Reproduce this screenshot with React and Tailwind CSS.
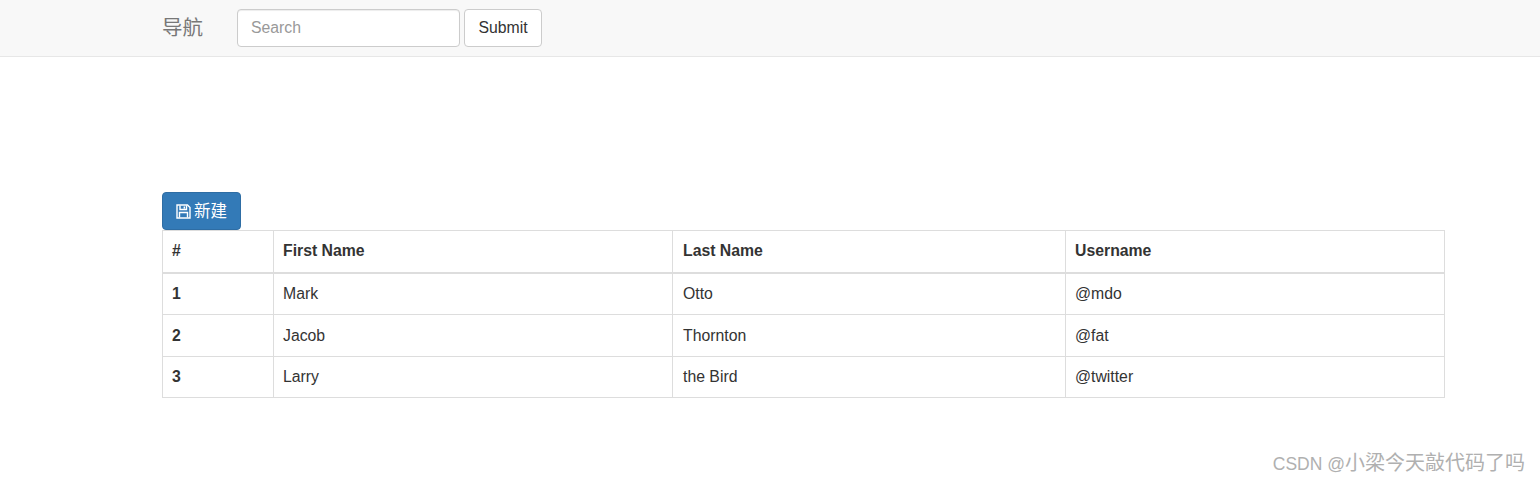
import React from 'react';

const rows = [
  { id: 1, first: 'Mark', last: 'Otto', username: '@mdo', height: 'h-[42px]' },
  { id: 2, first: 'Jacob', last: 'Thornton', username: '@fat', height: 'h-[42px]' },
  { id: 3, first: 'Larry', last: 'the Bird', username: '@twitter', height: 'h-[41px]' },
];

const fontStack = "font-['Liberation_Sans','Noto_Sans_CJK_SC',sans-serif]";

const SaveIcon = () => (
  <svg className="h-[15px] w-[15px]" viewBox="0 0 15 15" fill="none" stroke="currentColor" strokeWidth="1.4">
    <path d="M1 1h10.500l2.500 2.500v10.500h-13z" />
    <path d="M4 1.500v4h6.500v-4M8.300 2.500v2" />
    <path d="M3.500 13.500v-5h8v5" />
  </svg>
);

export default function App() {
  return (
    <div className={`relative h-[482px] bg-white text-[15.8px] text-[#333] ${fontStack}`}>
      {/* Navbar */}
      <nav className="h-[57px] border-b border-[#e7e7e7] bg-[#f8f8f8] pl-[162px]">
        <div className="flex h-[56px] items-center">
          <span className="w-[75px] text-[20.500px] text-[#777]">导航</span>
          <input
            type="text"
            placeholder="Search"
            className="h-[38px] w-[223px] rounded border border-[#ccc] bg-white px-[13px] text-[15.8px] placeholder-[#999] shadow-[inset_0_1px_1px_rgba(0,0,0,0.075)]"
          />
          <button className="ml-[4px] h-[38px] w-[78px] rounded border border-[#ccc] bg-white text-[15.8px] text-[#333]">
            Submit
          </button>
        </div>
      </nav>

      <div className="ml-[162px] w-[1283px] pt-[135px]">
        {/* New button */}
        <button className="flex h-[38px] w-[79px] items-center justify-center gap-[3px] rounded border border-[#2e6da4] bg-[#337ab7] text-[16.500px] text-white">
          <SaveIcon />
          新建
        </button>

        {/* Table */}
        <table className="w-full table-fixed border-collapse border border-[#ddd]">
          <colgroup>
            <col className="w-[111px]" />
            <col className="w-[399px]" />
            <col className="w-[393px]" />
            <col />
          </colgroup>
          <thead>
            <tr className="h-[42px] border-b-2 border-[#ddd] text-left font-bold">
              <th className="border-r border-[#ddd] px-[9px]">#</th>
              <th className="border-r border-[#ddd] px-[9px]">First Name</th>
              <th className="border-r border-[#ddd] pl-[10px] pr-[9px]">Last Name</th>
              <th className="px-[9px]">Username</th>
            </tr>
          </thead>
          <tbody>
            {rows.map((row) => (
              <tr key={row.id} className={`${row.height} border-b border-[#ddd]`}>
                <td className="border-r border-[#ddd] px-[9px] font-bold">{row.id}</td>
                <td className="border-r border-[#ddd] px-[9px]">{row.first}</td>
                <td className="border-r border-[#ddd] pl-[10px] pr-[9px]">{row.last}</td>
                <td className="px-[9px]">{row.username}</td>
              </tr>
            ))}
          </tbody>
        </table>
      </div>

      {/* Watermark */}
      <div className="absolute right-[15px] top-[451px] text-[20px] leading-[24px] text-[#b0b0b0]">
        <span className="text-[17.500px]">CSDN @</span>小梁今天敲代码了吗
      </div>
    </div>
  );
}
